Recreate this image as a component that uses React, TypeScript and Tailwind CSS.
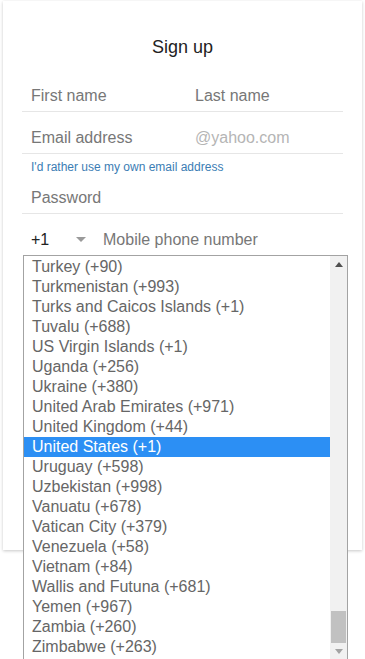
import React from "react"

const countries = [
  "Turkey (+90)",
  "Turkmenistan (+993)",
  "Turks and Caicos Islands (+1)",
  "Tuvalu (+688)",
  "US Virgin Islands (+1)",
  "Uganda (+256)",
  "Ukraine (+380)",
  "United Arab Emirates (+971)",
  "United Kingdom (+44)",
  "United States (+1)",
  "Uruguay (+598)",
  "Uzbekistan (+998)",
  "Vanuatu (+678)",
  "Vatican City (+379)",
  "Venezuela (+58)",
  "Vietnam (+84)",
  "Wallis and Futuna (+681)",
  "Yemen (+967)",
  "Zambia (+260)",
  "Zimbabwe (+263)",
]

export default function App() {
  return (
    <div className="relative h-[659px] w-[365px] overflow-hidden bg-white font-['Liberation_Sans',Arial,sans-serif]">
      {/* card */}
      <div className="ml-[3px] mt-[1px] h-[549px] w-[359px] bg-white px-[19px] pt-[34px] shadow-[0_1px_3px_rgba(0,0,0,0.22)]">
        <h1 className="text-center text-[18px] leading-[24px] text-[#222]">Sign up</h1>

        <div className="mt-[12px] flex h-[41px] items-end border-b border-[#e6e6e6] pb-[5px] text-[16px] leading-[20px] text-[#777]">
          <span className="w-[173px] pl-[9px]">First name</span>
          <span>Last name</span>
        </div>

        <div className="flex h-[42px] items-end border-b border-[#e6e6e6] pb-[5px] text-[16px] leading-[20px]">
          <span className="w-[173px] pl-[9px] text-[#777]">Email address</span>
          <span className="text-[#b5b5b5]">@yahoo.com</span>
        </div>

        <div className="mt-[5px] pl-[9px] text-[12px] leading-[16px] text-[#3b7db4]">
          I'd rather use my own email address
        </div>

        <div className="flex h-[39px] items-end border-b border-[#e6e6e6] pb-[5px] pl-[9px] text-[16px] leading-[20px] text-[#777]">
          Password
        </div>

        <div className="mt-[16px] flex items-center pl-[9px] text-[16px] leading-[20px]">
          <span className="w-[45px] text-[#222]">+1</span>
          <svg width="10" height="6" viewBox="0 0 10 6" className="mr-[17px]">
            <path d="M0 0 L10 0 L5 5 Z" fill="#9a9a9a" />
          </svg>
          <span className="text-[#777]">Mobile phone number</span>
        </div>
      </div>

      {/* open country list */}
      <div className="absolute left-[23px] top-[255px] flex h-[420px] w-[325px] border border-[#a3a3a3] bg-white">
        <ul className="flex-1 pt-[1px]">
          {countries.map((c) => (
            <li
              key={c}
              className={
                c === "United States (+1)"
                  ? "h-[20px] bg-[#2c8ff4] pl-[8px] text-[16px] leading-[20px] text-white"
                  : "h-[20px] pl-[8px] text-[16px] leading-[20px] text-[#666]"
              }
            >
              {c}
            </li>
          ))}
        </ul>
        <div className="flex w-[17px] flex-col bg-[#f1f1f1]">
          <div className="flex h-[17px] items-center justify-center">
            <svg width="8" height="5" viewBox="0 0 8 5">
              <path d="M0 5 L8 5 L4 0 Z" fill="#505050" />
            </svg>
          </div>
          <div className="h-[338px]" />
          <div className="mx-[1px] h-[32px] bg-[#c1c1c1]" />
          <div className="flex h-[17px] items-center justify-center">
            <svg width="8" height="5" viewBox="0 0 8 5">
              <path d="M0 0 L8 0 L4 5 Z" fill="#a3a3a3" />
            </svg>
          </div>
        </div>
      </div>
    </div>
  )
}
